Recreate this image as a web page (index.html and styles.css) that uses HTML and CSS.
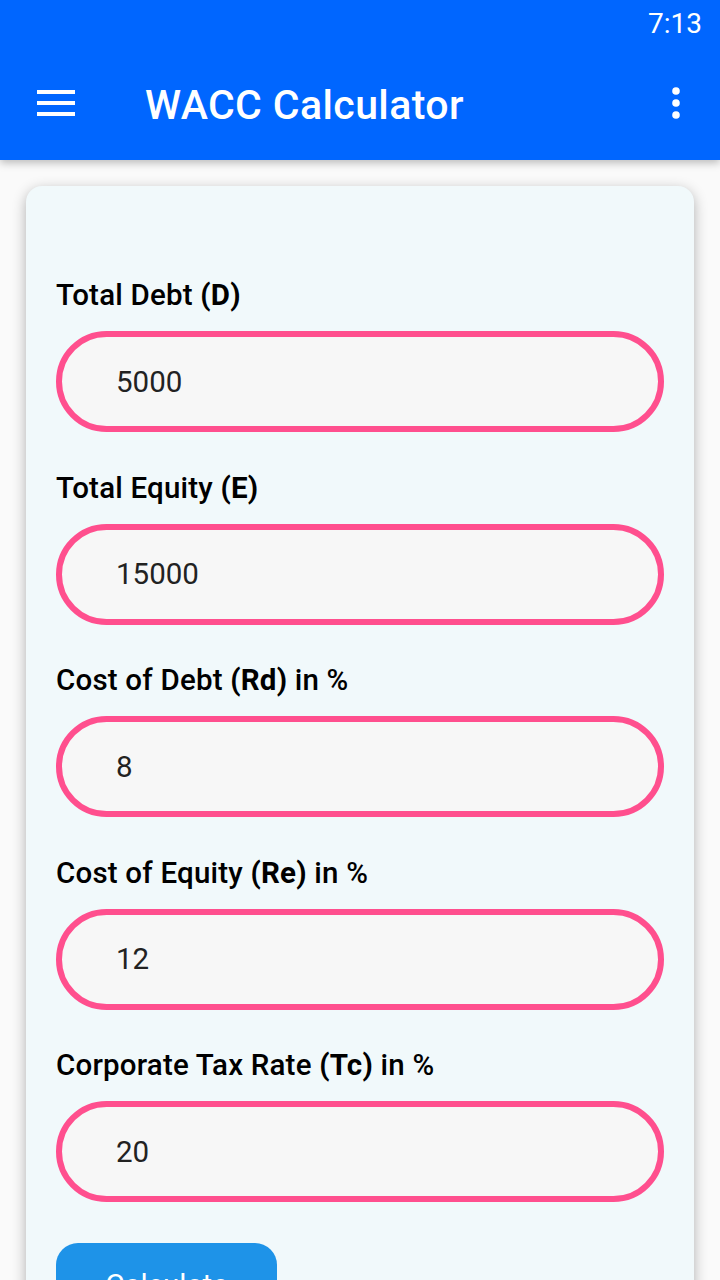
FILE: index.html
```html
<!DOCTYPE html>
<html lang="en">
  <head>
    <meta charset="UTF-8" />
    <meta name="viewport" content="width=device-width, initial-scale=1.0" />
    <title>WACC Calculator</title>
    <link rel="stylesheet" href="styles.css">
  </head>
  <body>
    <header class="topbar">
      <div class="status-bar">
        <span class="clock">7:13</span>
      </div>
      <div class="app-bar">
        <button class="icon-btn menu-btn" aria-label="Menu">
          <svg width="38" height="26" viewBox="0 0 38 26">
            <rect x="0" y="0" width="38" height="4" fill="#fff" />
            <rect x="0" y="11" width="38" height="4" fill="#fff" />
            <rect x="0" y="22" width="38" height="4" fill="#fff" />
          </svg>
        </button>
        <h1 class="title">WACC Calculator</h1>
        <button class="icon-btn more-btn" aria-label="More">
          <svg width="8" height="32" viewBox="0 0 8 32">
            <circle cx="4" cy="4" r="3.8" fill="#fff" />
            <circle cx="4" cy="16" r="3.8" fill="#fff" />
            <circle cx="4" cy="28" r="3.8" fill="#fff" />
          </svg>
        </button>
      </div>
    </header>

    <main class="content">
      <form class="card" id="waccForm">
        <div class="field">
          <label for="debt">Total Debt <b>(D)</b></label>
          <input type="text" id="debt" value="5000" />
        </div>
        <div class="field">
          <label for="equity">Total Equity <b>(E)</b></label>
          <input type="text" id="equity" value="15000" />
        </div>
        <div class="field">
          <label for="rd">Cost of Debt <b>(Rd)</b> in %</label>
          <input type="text" id="rd" value="8" />
        </div>
        <div class="field">
          <label for="re">Cost of Equity <b>(Re)</b> in %</label>
          <input type="text" id="re" value="12" />
        </div>
        <div class="field">
          <label for="tc">Corporate Tax Rate <b>(Tc)</b> in %</label>
          <input type="text" id="tc" value="20" />
        </div>
        <button type="submit" class="btn-calc">Calculate</button>
      </form>
    </main>
  </body>
</html>
```

FILE: styles.css
```css
body {
  font-family: Roboto, "Noto Sans", sans-serif;
  background-color: #fafafa;
  color: #000;
  margin: 0;
  padding: 0;
  height: 1280px;
  overflow: hidden;
}

.topbar {
  background-color: #0066ff;
  color: white;
  box-shadow: 0 3px 8px rgba(0, 0, 0, 0.25);
  position: relative;
  z-index: 2;
}

.status-bar {
  height: 48px;
  display: flex;
  justify-content: flex-end;
  align-items: center;
  padding: 0 18px;
}

.clock {
  font-size: 28px;
  line-height: 48px;
}

.app-bar {
  height: 112px;
  display: flex;
  align-items: center;
}

.icon-btn {
  background: none;
  border: none;
  padding: 0;
  display: flex;
  align-items: center;
  justify-content: center;
  cursor: pointer;
}

.menu-btn {
  width: 38px;
  margin-left: 37px;
  margin-bottom: 2px;
}

.more-btn {
  width: 24px;
  margin-left: auto;
  margin-right: 32px;
  margin-bottom: 2px;
}

.title {
  font-size: 41px;
  font-weight: 500;
  margin: 2px 0 0 70px;
  letter-spacing: 0.4px;
}

.content {
  padding: 26px 26px 0;
}

.card {
  background-color: #f1f9fb;
  border-radius: 16px;
  box-shadow: 0 4px 14px rgba(0, 0, 0, 0.3);
  padding: 91px 30px 0;
  height: 1200px;
}

.field {
  margin-bottom: 37.5px;
}

label {
  display: block;
  font-size: 29.5px;
  line-height: 36px;
  font-weight: 500;
  letter-spacing: 0.2px;
  margin-bottom: 18px;
}

label b {
  font-weight: 700;
}

input {
  box-sizing: border-box;
  width: 100%;
  height: 101px;
  border: 6px solid #ff4f8e;
  border-radius: 51px;
  background-color: #f7f7f7;
  padding: 0 54px;
  font-family: Roboto, sans-serif;
  font-size: 29.5px;
  color: #222;
  outline: none;
}

.btn-calc {
  margin-top: 3.5px;
  width: 221px;
  height: 96px;
  background-color: #1e93e8;
  color: white;
  border: none;
  border-radius: 22px;
  font-family: Roboto, sans-serif;
  font-size: 29.5px;
  padding: 0;
  padding-bottom: 12px;
}
```
